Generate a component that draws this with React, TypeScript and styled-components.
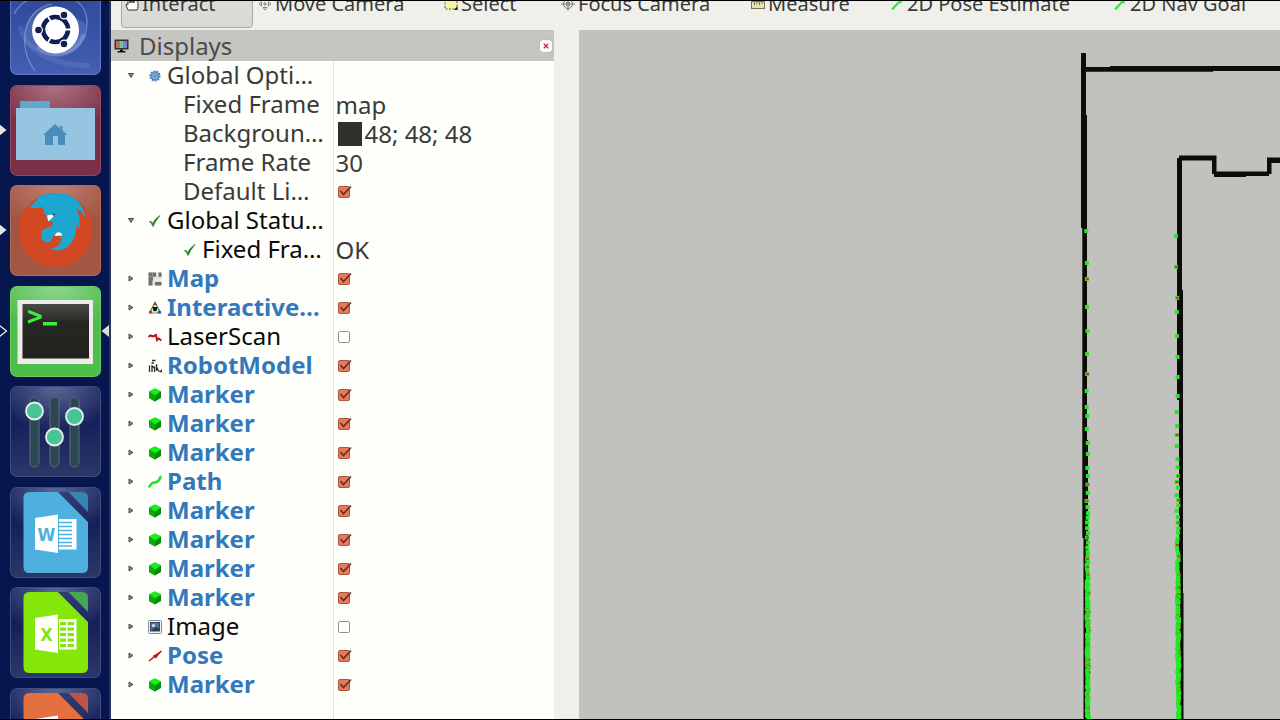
import React from "react";
import styled, { createGlobalStyle, css } from "styled-components";

const GlobalStyle = createGlobalStyle`
  *, *::before, *::after { box-sizing: border-box; }
  body { margin: 0; background: #000; }
  button { font: inherit; color: inherit; }
  svg { display: block; }
`;

const Screen = styled.div`
  height: 100vh;
  display: flex;
  overflow: hidden;
  border-top: 1px solid #000;
  border-bottom: 1px solid #000;
  background: #f0f0eb;
  font-family: "Noto Sans", "Open Sans", sans-serif;
  color: #3a3a38;
`;

/* ---------- Launcher ---------- */

const Launcher = styled.nav`
  flex: none;
  width: 111px;
  height: 795px;
  margin-top: -17px;
  padding-left: 10px;
  display: flex;
  flex-direction: column;
  justify-content: space-between;
  background: #06164e;
  border-right: 2px solid #2b3358;
`;

const Tile = styled.button<{ $top: string; $base: string; $foot: string; $edge: string }>`
  position: relative;
  width: 91px;
  height: 91px;
  padding: 0;
  border: 0;
  border-radius: 7px;
  background:
    radial-gradient(ellipse 70% 50% at 50% 0, ${(p) => p.$top}, transparent),
    linear-gradient(${(p) => p.$base} 40%, ${(p) => p.$foot});
  box-shadow: inset 0 0 0 1px ${(p) => p.$edge};
`;

const Pip = styled.svg<{ $side: "left" | "right" }>`
  position: absolute;
  top: 38px;
  ${(p) => (p.$side === "left" ? css`left: -10px;` : css`right: -8px;`)}
`;

type Running = "none" | "open" | "other";

const Pips = ({ running, active }: { running: Running; active?: boolean }) => (
  <>
    {running !== "none" && (
      <Pip $side="left" width="8" height="14" viewBox="0 0 8 14">
        <path
          d="M-1 1 L6.500 7 L-1 13 Z"
          fill={running === "open" ? "#e4e4e6" : "none"}
          stroke="#e4e4e6"
          strokeWidth={running === "open" ? 0 : 1.3}
        />
      </Pip>
    )}
    {active && (
      <Pip $side="right" width="8" height="14" viewBox="0 0 8 14">
        <path d="M8 1 L0.500 7 L8 13 Z" fill="#dcdce0" />
      </Pip>
    )}
  </>
);

const TileArt = ({ children }: { children: React.ReactNode }) => (
  <svg width="91" height="91" viewBox="0 0 91 91" aria-hidden="true">
    {children}
  </svg>
);

const DashArt = () => (
  <TileArt>
    <g fill="none">
      <path d="M4 30 C20 0 75 4 77 36 C78 54 66 68 52 70" stroke="#8ba0dd" strokeWidth="1.200" opacity=".7" />
      <path d="M14 58 C12 20 46 14 60 30 L76 40 C74 60 62 70 46 72 C30 72 20 64 14 58Z" fill="#8c9fd6" opacity=".25" />
      <path d="M25 87 C6 62 14 24 42 20" stroke="#8ba0dd" strokeWidth="1.200" opacity=".7" />
      <path d="M10 42 C16 66 36 80 80 82" stroke="#7d92d2" strokeWidth="5" opacity=".25" />
      <path d="M28 62 C40 76 66 72 74 50" stroke="#a5b4e2" strokeWidth="5" opacity=".35" />
    </g>
    <circle cx="45.500" cy="46" r="23.500" fill="#fff" />
    <circle cx="45.500" cy="45.500" r="12.500" fill="none" stroke="#101f52" strokeWidth="4.600" />
    <g stroke="#fff" strokeWidth="1.800">
      <path d="M45.500 45.500 H64 M45.500 45.500 L36.200 61.500 M45.500 45.500 L36.200 29.500" />
    </g>
    <circle cx="45.500" cy="45.500" r="10" fill="#fff" />
    {[[28.5, 46], [54, 31], [54, 60]].map(([cx, cy]) => (
      <circle key={cy} cx={cx} cy={cy} r="3.900" fill="#101f52" stroke="#fff" strokeWidth="1.200" />
    ))}
  </TileArt>
);

const FilesArt = () => (
  <TileArt>
    <rect x="10" y="16" width="30" height="10" fill="#62a5cd" />
    <rect x="6" y="23" width="79" height="52" fill="#96c5e2" />
    <path d="M33 50 L45 39 L50 43.500 V41 H52.500 V45.500 L57.500 50 H55 V60 H48 V51 H43 V60 H35 V50Z" fill="#4b8db9" />
  </TileArt>
);

const FirefoxArt = () => (
  <TileArt>
    <circle cx="45.500" cy="45" r="37" fill="#d24822" />
    <path
      d="M19 21.500 C25 20 26 12 33 10 C42 7 55 7 62 12 C70 16 75 25 75.500 33 C72 27 70 25 67 24 C70 32 70 38 69 44 L66 39 C67 50 62 60 55 63.500 C50 66 44 66 40 63.500 C47 63 51 60 51 53 C51 49 49 48 46 49 C42 50 43 56 38 57.500 C33 58 31 54 31 50 C31 45 35 43 40 42 C43 40 44 38 41 36 L37 36 L36.500 30 L34 28 L33 22 C28 24 22 23 19 21.500Z"
      fill="#1da6cf"
    />
    <path d="M37 30.500 L45 29 L43 32 L38.500 36.500 Z" fill="#fff" />
    <path d="M42 28.500 L45.500 29 L43.500 31Z" fill="#333" />
    <path d="M45 51 C45 46.500 52 46 52 50.500Z" fill="#fff" />
  </TileArt>
);

const TerminalArt = () => (
  <TileArt>
    <defs>
      <linearGradient id="term" x1="0" y1="0" x2="0" y2="1">
        <stop offset="0" stopColor="#4a4a48" />
        <stop offset=".35" stopColor="#262622" />
        <stop offset="1" stopColor="#22221e" />
      </linearGradient>
    </defs>
    <rect x="7.500" y="14" width="75.500" height="64" fill="#ecece8" />
    <rect x="12.500" y="18" width="66.500" height="54.500" fill="url(#term)" />
    <text x="17" y="39" fontFamily="DejaVu Sans Mono" fontWeight="700" fontSize="26" fill="#3ff03a">
      &gt;
    </text>
    <rect x="33" y="36" width="14" height="3.500" fill="#3ff03a" />
  </TileArt>
);

const MixerArt = () => (
  <TileArt>
    {[[24.5, 25], [44.5, 51], [64.5, 30.5]].map(([x, y]) => (
      <g key={x}>
        <rect x={x - 4.5} y="11" width="9" height="70" rx="4.500" fill="#2c4654" stroke="#5a6f80" />
        <circle cx={x} cy={y} r="8.500" fill="#49c497" stroke="#e8eef0" strokeWidth="1.800" />
      </g>
    ))}
  </TileArt>
);

const OfficeArt = ({ fill, fold, letter, children }: { fill: string; fold: string; letter: string; children?: React.ReactNode }) => (
  <TileArt>
    <path d="M19.500 5 H48 L78 35 V80 Q78 86 72 86 H19.500 Q13.500 86 13.500 80 V11 Q13.500 5 19.500 5Z" fill={fill} />
    <path d="M48 5 H58.500 L78 25 V35Z" fill="#1f2c62" opacity=".6" />
    <path d="M58.500 5 H72 Q78 5 78 11 V25Z" fill={fold} />
    <path d="M25 31 L48 27.500 V66 L25 62.500Z" fill="#fff" />
    <rect x="49" y="32" width="17.500" height="30.500" fill="#fff" />
    {children}
    <text
      x="36.500"
      y="54"
      textAnchor="middle"
      fontFamily="Liberation Sans Narrow, DejaVu Sans Condensed, sans-serif"
      fontWeight="700"
      fontSize="18"
      fill={fill}
    >
      {letter}
    </text>
  </TileArt>
);

const DocLines = () => (
  <path d="M49 35.500H62 M49 39.500H62 M49 43.500H62 M49 47.500H62 M49 51.500H62 M49 55.500H62 M49 59H62" stroke="#4db0df" strokeWidth="1.400" />
);

const SheetCells = () => (
  <g fill="#85e60a">
    {[35, 40.5, 46, 51.5, 57].map((y) => (
      <React.Fragment key={y}>
        <rect x="50" y={y} width="6" height="3.200" />
        <rect x="57.500" y={y} width="6.500" height="3.200" />
      </React.Fragment>
    ))}
  </g>
);

/* ---------- Toolbar ---------- */

const Workspace = styled.div`
  flex: 1;
  min-width: 0;
  display: flex;
  flex-direction: column;
`;

const Toolbar = styled.div`
  flex: none;
  height: 29px;
  display: flex;
  align-items: flex-end;
  overflow: hidden;
  padding: 0 0 2px 10px;
  font-size: 20px;
  line-height: 24px;
`;

const Tool = styled.button<{ $width: number; $pressed?: boolean }>`
  flex: none;
  width: ${(p) => p.$width}px;
  height: 46px;
  display: flex;
  align-items: center;
  gap: 3px;
  padding: 0 0 3px 3px;
  border: 1px solid transparent;
  border-radius: 4px;
  background: none;
  white-space: nowrap;
  ${(p) =>
    p.$pressed &&
    css`
      border-color: #a9a9a4;
      background: linear-gradient(#dededa, #d9d9d4);
    `}
`;

const ToolSpacer = styled.span`
  flex: none;
  width: 1px;
`;

const Icon14 = ({ children }: { children: React.ReactNode }) => (
  <svg width="14" height="14" viewBox="0 0 14 14" aria-hidden="true">
    {children}
  </svg>
);

const HandIcon = () => (
  <Icon14>
    <path d="M3 13 L1 8 Q1 6 3 7.500 V2 Q4 1 5 2 V6 V1 Q6 0 7 1 V6 V1.500 Q8 .5 9 1.500 V6 V3 Q11 2 11.500 4 V4 Q13 4 13 5.500 V9 Q13 12 12 13Z" fill="#fff" stroke="#33332f" strokeWidth="1" />
  </Icon14>
);
const MoveIcon = () => (
  <Icon14>
    <path d="M7 1 L9 3.500 H5Z M7 13 L9 10.500 H5Z M1 7 L3.500 5 V9Z M13 7 L10.500 5 V9Z M5 7H9 M7 5V9" fill="#fff" stroke="#777773" strokeWidth=".9" />
  </Icon14>
);
const SelectIcon = () => (
  <Icon14>
    <rect x="1" y="2" width="12" height="10" fill="#f7f3a0" stroke="#55554d" strokeDasharray="2 1.500" />
    <path d="M13.500 9V13H10Z" fill="#111" />
  </Icon14>
);
const FocusIcon = () => (
  <Icon14>
    <circle cx="7" cy="7" r="4.500" fill="none" stroke="#777773" />
    <circle cx="7" cy="7" r="2" fill="none" stroke="#777773" />
    <path d="M7 0V14 M0 7H14" stroke="#777773" strokeWidth=".9" />
  </Icon14>
);
const RulerIcon = () => (
  <Icon14>
    <rect x=".5" y="4.500" width="13" height="7" fill="#e6dfb0" stroke="#77755f" />
    <path d="M3.500 5V8 M6 5V7 M8.500 5V8 M11 5V7" stroke="#77755f" />
  </Icon14>
);
const GreenArrowIcon = () => (
  <Icon14>
    <path d="M2 12.500 L10 4" stroke="#2ee83b" strokeWidth="2.200" />
    <path d="M12 2 L11.500 7 L7 3.500Z" fill="#2ee83b" />
  </Icon14>
);

const tools = [
  { label: "Move Camera", width: 186, icon: <MoveIcon /> },
  { label: "Select", width: 117, icon: <SelectIcon /> },
  { label: "Focus Camera", width: 190, icon: <FocusIcon /> },
  { label: "Measure", width: 139, icon: <RulerIcon /> },
  { label: "2D Pose Estimate", width: 223, icon: <GreenArrowIcon /> },
  { label: "2D Nav Goal", width: 160, icon: <GreenArrowIcon /> },
];

/* ---------- Displays panel ---------- */

const Body = styled.main`
  flex: 1;
  min-height: 0;
  display: flex;
  gap: 25px;
`;

const Panel = styled.section`
  flex: none;
  width: 443px;
  display: flex;
  flex-direction: column;
  font-size: 24px;
  line-height: 28px;
`;

const PanelHeader = styled.header`
  flex: none;
  height: 31px;
  display: flex;
  align-items: center;
  gap: 10px;
  padding: 0 2px 0 3px;
  background: #c5c5c1;
`;

const PanelTitle = styled.h1`
  flex: 1;
  margin: 0;
  font-size: 24px;
  font-weight: 400;
  line-height: 28px;
  color: #4b4b48;
`;

const CloseButton = styled.button`
  width: 12px;
  height: 12px;
  padding: 3px;
  border: 0;
  border-radius: 3px;
  background: #fbfbf9;
  box-shadow: 0 0 1px #8d8d88;
`;

const TreeArea = styled.div`
  flex: 1;
  min-height: 0;
  background: #fefefb;
  display: flex;
`;

const Tree = styled.table`
  width: 100%;
  height: 100%;
  border-collapse: collapse;
  table-layout: fixed;
`;

const NameCol = styled.col`
  width: 222px;
`;

const Row = styled.tr`
  height: 29px;
`;

const FillRow = styled.tr`
  height: auto;
`;

const Cell = styled.td`
  padding: 0 0 0 2px;
  height: 29px;
  white-space: nowrap;
`;

const NameCell = styled.th`
  padding: 0;
  font-weight: 400;
  text-align: left;
  white-space: nowrap;
  border-right: 1px solid #e2e2df;
`;

const NameLine = styled.div<{ $level: number }>`
  display: flex;
  align-items: center;
  height: 29px;
  padding-left: ${(p) => (p.$level === 0 ? 15 : 72)}px;
`;

const Twisty = styled.button`
  width: 10px;
  height: 10px;
  margin-right: 12px;
  padding: 0;
  border: 0;
  background: none;
`;

const IconSlot = styled.span`
  width: 14px;
  height: 14px;
  margin-right: 5px;
`;

const Name = styled.span<{ $tone: Tone }>`
  padding-bottom: 1px;
  color: ${(p) => (p.$tone === "on" ? "#3279bb" : p.$tone === "plain" ? "#0a0a0a" : "#3a3a38")};
  font-weight: ${(p) => (p.$tone === "on" ? 700 : 400)};
`;

const Value = styled.div`
  display: flex;
  align-items: center;
  gap: 3px;
  height: 28px;
`;

const Swatch = styled.span`
  width: 24px;
  height: 24px;
  margin-left: 2px;
  background: #30302c;
`;

const CheckWrap = styled.span`
  position: relative;
  display: block;
  width: 12px;
  height: 12px;
  margin-left: 2px;
`;

const CheckInput = styled.input`
  appearance: none;
  display: block;
  width: 12px;
  height: 12px;
  margin: 0;
  border: 1px solid #92928e;
  border-radius: 2px;
  background: #fff;
  &:checked {
    border-color: #a5583f;
    background: #e8795a;
  }
  & + svg { display: none; }
  &:checked + svg { display: block; }
`;

const Tick = styled.svg`
  position: absolute;
  left: 0;
  top: -1px;
  pointer-events: none;
`;

const Check = ({ label, checked }: { label: string; checked: boolean }) => (
  <CheckWrap>
    <CheckInput type="checkbox" aria-label={label} defaultChecked={checked} />
    <Tick width="14" height="13" viewBox="0 0 14 13">
      <path d="M2.500 6 L5.500 9.500 L13 1.500" fill="none" stroke="#5e2f24" strokeWidth="1.600" />
    </Tick>
  </CheckWrap>
);

const GearIcon = () => (
  <Icon14>
    <circle cx="7" cy="7" r="4.600" fill="#a9c6e6" stroke="#4478b4" strokeWidth="2" strokeDasharray="1.800 1" />
    <circle cx="7" cy="7" r="3.500" fill="none" stroke="#4a7fba" strokeWidth=".8" />
    <path d="M7 3V11 M3 7H11 M4.200 4.200L9.800 9.800 M9.800 4.200L4.200 9.800" stroke="#4a7fba" strokeWidth=".7" />
  </Icon14>
);
const OkIcon = () => (
  <Icon14>
    <path d="M1.500 7.500 Q3 6.500 4.500 9.500 Q7 4.500 12 1.500 Q8 6 5 12.500 Q3.500 9 1.500 7.500Z" fill="#23852c" stroke="#23852c" strokeWidth=".8" />
  </Icon14>
);
const MapIcon = () => (
  <Icon14>
    <rect x=".5" y=".5" width="13" height="13" fill="#e6e6e3" />
    <path d="M.5 .5H8V5H5V8.500H4.500V13.500H.5Z M10.500 .5H13.500V5H10.500Z M7 10H13.500V13.500H7Z" fill="#70706d" />
    <path d="M.5 4.800H13 M4.500 1V5" stroke="#c9c9c6" strokeWidth=".4" />
  </Icon14>
);
const InteractiveIcon = () => (
  <Icon14>
    <path d="M7 1.500 L12.500 12 H1.500Z" fill="#e5e5ea" stroke="#2b9c3c" strokeWidth="1.200" />
    <path d="M4.500 6 H9.500 L8.500 10 H5.500Z" fill="#111" />
    <path d="M7 .5 L8.800 4 H5.200Z" fill="#c0283a" />
    <circle cx="2.500" cy="11" r="1.600" fill="#d22b2b" />
    <circle cx="11.500" cy="11" r="1.600" fill="#2b3ed2" />
    <circle cx="7" cy="11.500" r="1.400" fill="#e3d02c" />
  </Icon14>
);
const LaserIcon = () => (
  <Icon14>
    <path d="M.5 7 L2.500 5.500 L5 6.500 L8 5 L9 10 L10.500 8.500 L13.500 10.500" fill="none" stroke="#bd1020" strokeWidth="2" />
  </Icon14>
);
const RobotIcon = () => (
  <Icon14>
    <path d="M4 1.500H7.500 M3.500 4H6 M1.500 6.500V13 M4 6V13 M4 8H6.500V13 M8.500 5V12 M8.500 8L11 12.500 M11.500 12.500H13.500V10.500" fill="none" stroke="#2b2b2b" strokeWidth="1.300" />
  </Icon14>
);
const CubeIcon = () => (
  <Icon14>
    <path d="M7 .5 L13 3.500 V10 L7 13.500 L1 10 V3.500Z" fill="#078a0a" />
    <path d="M7 .5 L13 3.500 L7 7.500 L1 3.500Z" fill="#12f218" />
    <path d="M1 3.500 L7 7.500 V13.500 L1 10Z" fill="#0aa70e" />
  </Icon14>
);
const PathIcon = () => (
  <Icon14>
    <path d="M1.500 11.500 Q3.500 7.500 6.500 7.500 Q10.500 7.500 12.500 2" fill="none" stroke="#1fe32a" strokeWidth="2.600" strokeLinecap="round" />
  </Icon14>
);
const ImageIcon = () => (
  <Icon14>
    <rect x=".5" y=".5" width="13" height="13" rx="1" fill="#f2f3f6" stroke="#8089a0" />
    <rect x="2.500" y="2.500" width="9" height="8.500" fill="#5d7396" stroke="#33435f" />
    <circle cx="5.500" cy="5.500" r="1.500" fill="#dfe8f2" />
    <path d="M3 10.500 L8 7 L11 8.500 V10.500Z" fill="#28364c" />
  </Icon14>
);
const PoseIcon = () => (
  <Icon14>
    <path d="M1 12 L13.500 2" stroke="#c41414" strokeWidth="1.600" />
    <path d="M13.500 2 L4.500 7 L8 9.500Z" fill="#c41414" />
  </Icon14>
);

type Tone = "prop" | "plain" | "on";
type Item = {
  name: string;
  tone: Tone;
  level: number;
  open?: boolean;
  icon?: React.ReactNode;
  text?: string;
  swatch?: boolean;
  checked?: boolean;
};

const marker: Item = { name: "Marker", tone: "on", level: 0, icon: <CubeIcon />, checked: true };

const items: Item[] = [
  { name: "Global Opti…", tone: "prop", level: 0, open: true, icon: <GearIcon /> },
  { name: "Fixed Frame", tone: "prop", level: 1, text: "map" },
  { name: "Backgroun…", tone: "prop", level: 1, text: "48; 48; 48", swatch: true },
  { name: "Frame Rate", tone: "prop", level: 1, text: "30" },
  { name: "Default Li…", tone: "prop", level: 1, checked: true },
  { name: "Global Statu…", tone: "plain", level: 0, open: true, icon: <OkIcon /> },
  { name: "Fixed Fra…", tone: "plain", level: 1, icon: <OkIcon />, text: "OK" },
  { name: "Map", tone: "on", level: 0, icon: <MapIcon />, checked: true },
  { name: "Interactive…", tone: "on", level: 0, icon: <InteractiveIcon />, checked: true },
  { name: "LaserScan", tone: "plain", level: 0, icon: <LaserIcon />, checked: false },
  { name: "RobotModel", tone: "on", level: 0, icon: <RobotIcon />, checked: true },
  marker,
  marker,
  marker,
  { name: "Path", tone: "on", level: 0, icon: <PathIcon />, checked: true },
  marker,
  marker,
  marker,
  marker,
  { name: "Image", tone: "plain", level: 0, icon: <ImageIcon />, checked: false },
  { name: "Pose", tone: "on", level: 0, icon: <PoseIcon />, checked: true },
  marker,
];

const TreeRow = ({ item }: { item: Item }) => (
  <Row>
    <NameCell scope="row">
      <NameLine $level={item.level}>
        {item.level === 0 && (
          <Twisty aria-label={`Toggle ${item.name}`} aria-expanded={!!item.open}>
            <svg width="10" height="10" viewBox="0 0 10 10">
              <path
                d={item.open ? "M2.500 2.500 H7.500 L5 6.500Z" : "M3 2 L7 4.500 L3 7Z"}
                fill="#8a8a87"
                stroke="#4a4a48"
              />
            </svg>
          </Twisty>
        )}
        {item.icon && <IconSlot>{item.icon}</IconSlot>}
        <Name $tone={item.tone}>{item.name}</Name>
      </NameLine>
    </NameCell>
    <Cell>
      <Value>
        {item.swatch && <Swatch />}
        {item.text}
        {item.checked !== undefined && <Check label={item.name} checked={item.checked} />}
      </Value>
    </Cell>
  </Row>
);

/* ---------- Map view ---------- */

const Viewport = styled.div`
  flex: 1;
  min-width: 0;
  overflow: hidden;
  background: #c1c1bd;
`;

type Hit = { x: number; y: number; red: boolean };

const leftSparse = [231, 263, 279, 307, 331, 354, 374, 391, 407, 416, 429, 443, 454, 468];
const rightSparse = [236, 267, 298, 312, 336, 357, 377, 396, 412, 426, 435, 446, 459];
const redAt = new Set([279, 374, 267, 298, 435]);

// Range returns get closer together toward the robot, which sits below the view.
const scan = (sparse: number[], xAt: (y: number) => number, seed: number): Hit[] => {
  let state = seed;
  const rand = () => {
    state = (state * 16807) % 2147483647;
    return state / 2147483647;
  };
  const hits = sparse.map((y) => ({ x: xAt(y) + Math.round(rand() * 2 - 1) / 2, y, red: redAt.has(y) }));
  let y = sparse[sparse.length - 1] + 8;
  while (y < 719) {
    hits.push({ x: xAt(y) + rand() * 2 - 1, y, red: rand() < 0.25 });
    y += Math.max(1.4, 9 - (y - 465) / 16) * (0.7 + rand() * 0.5);
  }
  return hits;
};

const hits = [
  ...scan(leftSparse, (y) => 1086.8 + (y - 231) / 450, 71),
  ...scan(rightSparse, (y) => 1176.4 + (y - 236) / 220, 913),
];

const MapView = () => (
  <svg width="100%" height="100%" viewBox="579 30 701 689" preserveAspectRatio="xMinYMin slice" role="img" aria-label="Map">
    <g fill="#0c0c08">
      <path d="M1081 53H1086V115H1087V440H1088V719H1083.500V538H1082.300V228H1081Z" />
      <path d="M1086 67H1110V66H1280V71H1213V71.700H1086Z" />
      <path d="M1177 158H1179V155.500H1216.500V171.500H1267V157.500H1280V163H1271.500V174H1269V176H1246V177H1214V174H1212V160.500H1182V290H1183V593H1183.500V719H1179V400H1177Z" />
    </g>
    {hits.map((h, i) => (
      <g key={i}>
        <rect x={h.x - 2} y={h.y - 2} width="4" height="4" fill="#22ea22" />
        {h.red && <rect x={h.x - 1} y={h.y - 1} width="3" height="2" fill="#a8501e" />}
      </g>
    ))}
  </svg>
);

const glass = { $top: "#5a6796", $base: "#15205a", $foot: "#2c386a", $edge: "#3f4c7c" };

export default function App() {
  return (
    <>
      <GlobalStyle />
      <Screen>
        <Launcher aria-label="Launcher">
          <Tile aria-label="Dash" $top="#2b4496" $base="#3450a4" $foot="#4560b2" $edge="#6178c0">
            <DashArt />
          </Tile>
          <Tile aria-label="Files" $top="#ad7484" $base="#7c3047" $foot="#7c3047" $edge="#94485f">
            <FilesArt />
            <Pips running="open" />
          </Tile>
          <Tile aria-label="Firefox" $top="#bd7f74" $base="#a25441" $foot="#a25844" $edge="#b56c58">
            <FirefoxArt />
            <Pips running="open" />
          </Tile>
          <Tile aria-label="Terminal" $top="#8fd690" $base="#4dbd4b" $foot="#4dbd4b" $edge="#6acb66">
            <TerminalArt />
            <Pips running="other" active />
          </Tile>
          <Tile aria-label="Mixer" {...glass}>
            <MixerArt />
          </Tile>
          <Tile aria-label="Writer" {...glass}>
            <OfficeArt fill="#4db0df" fold="#3a84b5" letter="W">
              <DocLines />
            </OfficeArt>
          </Tile>
          <Tile aria-label="Calc" {...glass}>
            <OfficeArt fill="#85e60a" fold="#48a552" letter="X">
              <SheetCells />
            </OfficeArt>
          </Tile>
          <Tile aria-label="Impress" {...glass}>
            <OfficeArt fill="#e4703f" fold="#bb5644" letter="P" />
          </Tile>
        </Launcher>

        <Workspace>
          <Toolbar role="toolbar">
            <Tool $width={132} $pressed>
              <HandIcon />
              Interact
            </Tool>
            <ToolSpacer />
            {tools.map((t) => (
              <Tool key={t.label} $width={t.width}>
                {t.icon}
                {t.label}
              </Tool>
            ))}
          </Toolbar>
          <Body>
            <Panel>
              <PanelHeader>
                <svg width="15" height="14" viewBox="0 0 15 14" aria-hidden="true">
                  <rect x=".5" y=".5" width="14" height="10" fill="#333" />
                  <rect x="2" y="2" width="4" height="7" fill="#c06a70" />
                  <rect x="6" y="2" width="3" height="7" fill="#79c487" />
                  <rect x="9" y="2" width="4" height="7" fill="#7b80cf" />
                  <path d="M6 10.500H9V12H11.500V13.500H3.500V12H6Z" fill="#111" />
                </svg>
                <PanelTitle>Displays</PanelTitle>
                <CloseButton aria-label="Close">
                  <svg width="6" height="6" viewBox="0 0 6 6">
                    <path d="M.8 .8 L5.200 5.200 M5.200 .8 L.8 5.200" stroke="#c5313a" strokeWidth="1.400" />
                  </svg>
                </CloseButton>
              </PanelHeader>
              <TreeArea>
                <Tree>
                  <colgroup>
                    <NameCol />
                    <col />
                  </colgroup>
                  <tbody>
                    {items.map((item, i) => (
                      <TreeRow key={i} item={item} />
                    ))}
                    <FillRow>
                      <NameCell as="td" />
                      <td />
                    </FillRow>
                  </tbody>
                </Tree>
              </TreeArea>
            </Panel>
            <Viewport>
              <MapView />
            </Viewport>
          </Body>
        </Workspace>
      </Screen>
    </>
  );
}
